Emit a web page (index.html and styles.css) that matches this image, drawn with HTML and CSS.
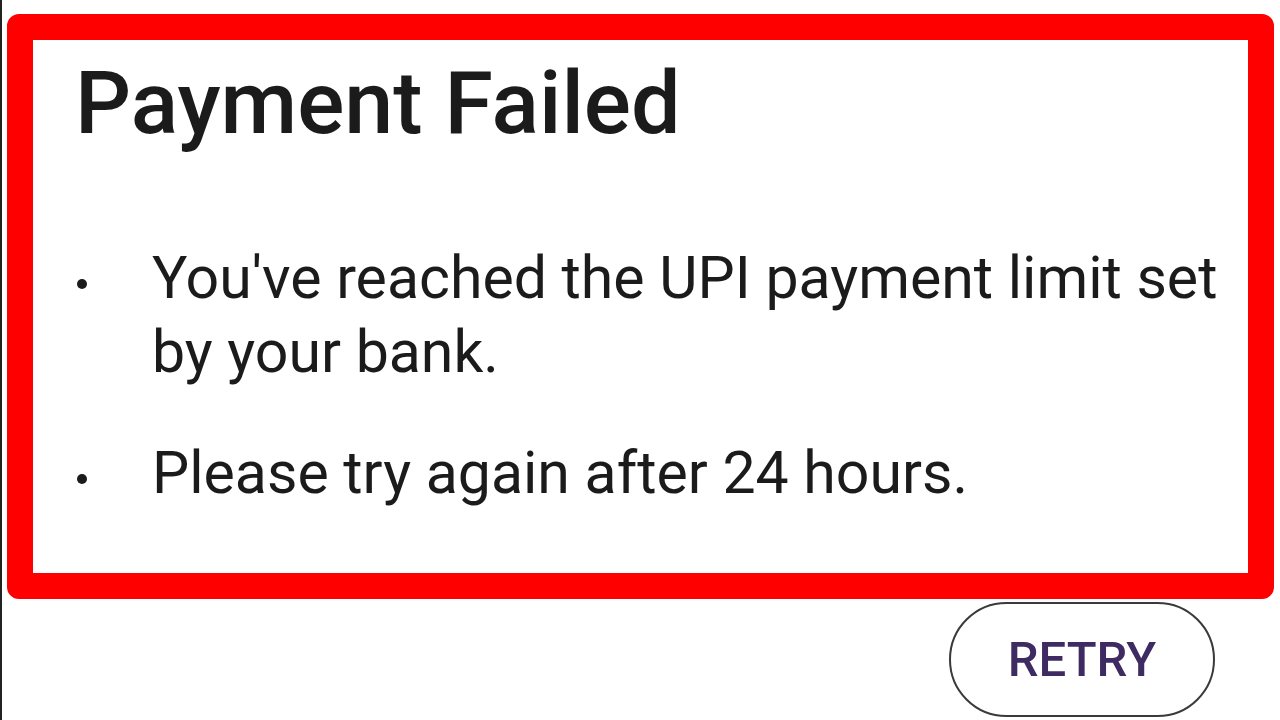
FILE: index.html
```html
<!DOCTYPE html>
<html lang="en">
<head>
    <meta charset="UTF-8">
    <meta name="viewport" content="width=device-width, initial-scale=1.0">
    <title>Payment Failed</title>
    <link rel="stylesheet" href="styles.css">
</head>
<body>
    <div class="page">
        <div class="notice">
            <h1 class="notice-title">Payment Failed</h1>
            <ul class="reasons">
                <li>You've reached the UPI payment limit set by your bank.</li>
                <li>Please try again after 24 hours.</li>
            </ul>
        </div>

        <div class="actions">
            <button class="retry" type="button">RETRY</button>
        </div>
    </div>
</body>
</html>
```

FILE: styles.css
```css
html, body {
    margin: 0;
    padding: 0;
    background: #fff;
}
body {
    font-family: Roboto, "Liberation Sans", Arial, sans-serif;
    color: #1b1b1b;
    height: 720px;
    overflow: hidden;
    border-left: 2px solid #222;
    box-sizing: border-box;
}
.page {
    padding: 14px 6px 0 5px;
}
.notice {
    box-sizing: border-box;
    width: 1267px;
    height: 585px;
    border: 26px solid #fe0000;
    border-radius: 12px;
    padding: 19px 0 0 42px;
}
.notice-title {
    margin: 0;
    font-size: 88px;
    line-height: 88px;
    font-weight: 500;
    letter-spacing: 0;
}
.reasons {
    list-style: none;
    margin: 94px 0 0;
    padding: 0;
}
.reasons li {
    display: grid;
    grid-template-columns: 77px 1fr;
    font-size: 59px;
    line-height: 74px;
    margin-bottom: 47px;
}
.reasons li::before {
    content: "";
    width: 10px;
    height: 10px;
    border-radius: 50%;
    background: #1b1b1b;
    margin: 38px 0 0 2px;
}
.actions {
    display: flex;
    justify-content: flex-end;
    padding: 3px 59px 0 0;
    width: 1267px;
    box-sizing: border-box;
}
.retry {
    width: 266px;
    height: 115px;
    border: 2px solid #3a3a3a;
    border-radius: 58px;
    background: #fff;
    font-family: Roboto, "Liberation Sans", Arial, sans-serif;
    font-size: 49px;
    font-weight: 500;
    color: #3d2b62;
    cursor: pointer;
}
```
